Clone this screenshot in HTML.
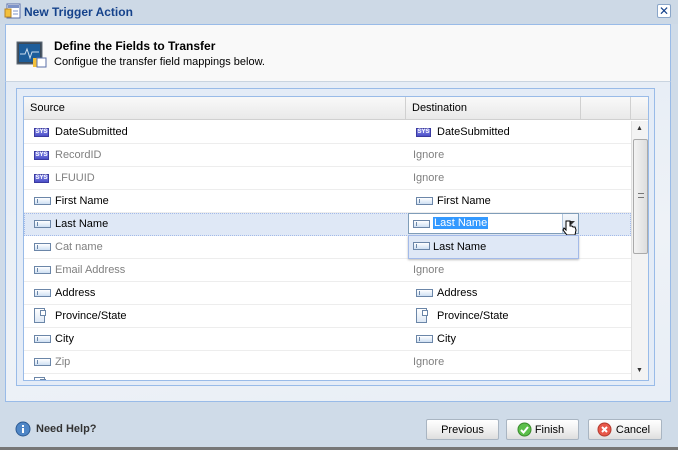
<!DOCTYPE html>
<html><head><style>
*{margin:0;padding:0;box-sizing:border-box}
body{width:678px;height:450px;overflow:hidden;background:#cfdbe8;font-family:"Liberation Sans",sans-serif;font-size:11px;position:relative}
.abs{position:absolute}
.title{left:0;top:0;width:678px;height:24px;background:#cdd9e6;}
.title span{position:absolute;left:24px;top:5px;font-weight:bold;font-size:12px;color:#15428b}
.hdr{left:5px;top:24px;width:666px;height:58px;background:#f9f9f9;border:1px solid #99bbe8;border-bottom:1px solid #c9d4e0}
.body{left:5px;top:82px;width:666px;height:320px;background:linear-gradient(170deg,#e3ebf5,#eef2f7 60%,#e8eef6);border:1px solid #99bbe8;border-top:none}
.gridwrap{left:16px;top:88px;width:639px;height:298px;border:1px solid #99bbe8;background:#e4ecf7}
.grid{left:23px;top:96px;width:626px;height:285px;border:1px solid #99bbe8;background:#fff;overflow:hidden}
.gh{position:absolute;left:0;top:0;width:626px;height:23px;background:linear-gradient(#f9f9f9,#e9e9e9);border-bottom:1px solid #d0d0d0}
.gh div{position:absolute;top:0;height:23px;line-height:22px;padding-left:6px;border-right:1px solid #d0d0d0;color:#000}
.row{position:absolute;left:0;width:607px;height:23px;border-bottom:1px solid #ededed}
.row span{position:absolute;top:5px}
.g{color:#808080}
.sys{position:absolute;width:15px;height:9px;background:linear-gradient(#8a8ee8,#4b4fc8);border:1px solid #3a3aa0;color:#fff;font-size:6px;line-height:7px;text-align:center;font-weight:bold;font-style:normal}
.tb{position:absolute;width:17px;height:8px;border:1px solid #6b86a8;background:linear-gradient(#fff,#cfe0f3)}
.tb:before{content:"";position:absolute;left:2px;top:1px;width:1px;height:4px;background:#6b86a8}
.dd{position:absolute;width:11px;height:15px;border:1px solid #6b86a8;background:linear-gradient(#fff,#dde8f5)}
.dd:after{content:"";position:absolute;left:5px;top:1px;width:4px;height:4px;border:1px solid #6b86a8;background:#fff}
.scroll{left:607px;top:24px;width:18px;height:260px;background:#f3f3f3;border-left:1px solid #e0e0e0}
.btn{position:absolute;top:419px;height:21px;border:1px solid #a9b5c2;border-radius:2px;background:linear-gradient(#fff,#f1f1f1 50%,#dedede);text-align:center;line-height:20px;font-size:11px;color:#000}
</style></head><body>
<div class="abs title"><svg style="position:absolute;left:4px;top:3px" width="17" height="17"><rect x="3" y="1" width="13" height="14" fill="#fff" stroke="#5a6fa8"/><rect x="4" y="2" width="11" height="3" fill="#7d93c8"/><path d="M1 6h6v8H1z" fill="#f3c03b" stroke="#b7852a"/><path d="M9 8h5M9 11h5" stroke="#7d93c8"/></svg><span>New Trigger Action</span>
<div style="position:absolute;left:657px;top:4px;width:14px;height:14px;border:1px solid #8aa6c9;background:#fff;border-radius:2px;color:#15428b;font-size:12px;line-height:12px;text-align:center">✕</div></div>
<div class="abs hdr">
<svg style="position:absolute;left:10px;top:16px" width="32" height="28"><rect x="1" y="1" width="25" height="22" fill="#3c4a58" stroke="#5f6b78"/><rect x="3" y="3" width="21" height="18" fill="#1d5d9a"/><path d="M4 13h5l2-5 3 9 2-6h7" stroke="#cde" fill="none"/><path d="M17 17h6v9h-6z" fill="#f3c03b"/><rect x="21" y="17" width="9" height="9" fill="#fff" stroke="#5a6fa8"/></svg>
<div style="position:absolute;left:48px;top:14px;font-weight:bold;font-size:12px">Define the Fields to Transfer</div>
<div style="position:absolute;left:48px;top:31px;font-size:11px">Configue the transfer field mappings below.</div>
</div>
<div class="abs body"></div>
<div class="abs gridwrap"></div>
<div class="abs grid">
<div class="gh"><div style="left:0;width:382px">Source</div><div style="left:382px;width:175px">Destination</div><div style="left:557px;width:50px"></div><div style="left:607px;width:19px;border:none"></div></div>

<div class="row" style="top:24px"><i class="sys" style="left:10px;top:7px">SYS</i><span style="left:31px">DateSubmitted</span><i class="sys" style="left:392px;top:7px">SYS</i><span style="left:413px">DateSubmitted</span></div>
<div class="row" style="top:47px"><i class="sys" style="left:10px;top:7px">SYS</i><span class="g" style="left:31px">RecordID</span><span class="g" style="left:389px">Ignore</span></div>
<div class="row" style="top:70px"><i class="sys" style="left:10px;top:7px">SYS</i><span class="g" style="left:31px">LFUUID</span><span class="g" style="left:389px">Ignore</span></div>
<div class="row" style="top:93px"><i class="tb" style="left:10px;top:7px"></i><span style="left:31px">First Name</span><i class="tb" style="left:392px;top:7px"></i><span style="left:413px">First Name</span></div>
<div class="row" style="top:116px;background:#dfe8f6;border:1px dotted #a3bae9"><i class="tb" style="left:9px;top:6px"></i><span style="left:30px;top:4px">Last Name</span></div>
<div class="row" style="top:139px"><i class="tb" style="left:10px;top:7px"></i><span class="g" style="left:31px">Cat name</span></div>
<div class="row" style="top:162px"><i class="tb" style="left:10px;top:7px"></i><span class="g" style="left:31px">Email Address</span><span class="g" style="left:389px">Ignore</span></div>
<div class="row" style="top:185px"><i class="tb" style="left:10px;top:7px"></i><span style="left:31px">Address</span><i class="tb" style="left:392px;top:7px"></i><span style="left:413px">Address</span></div>
<div class="row" style="top:208px"><i class="dd" style="left:10px;top:3px"></i><span style="left:31px">Province/State</span><i class="dd" style="left:392px;top:3px"></i><span style="left:413px">Province/State</span></div>
<div class="row" style="top:231px"><i class="tb" style="left:10px;top:7px"></i><span style="left:31px">City</span><i class="tb" style="left:392px;top:7px"></i><span style="left:413px">City</span></div>
<div class="row" style="top:254px"><i class="tb" style="left:10px;top:7px"></i><span class="g" style="left:31px">Zip</span><span class="g" style="left:389px">Ignore</span></div>
<div class="row" style="top:277px"><i class="dd" style="left:10px;top:3px"></i></div>

<div class="abs scroll"><div style="position:absolute;left:4px;top:4px;font-size:7px;color:#333">▲</div>
<div style="position:absolute;left:1px;top:18px;width:15px;height:115px;border:1px solid #aaa;border-radius:2px;background:linear-gradient(90deg,#f3f3f3,#ddd)"><div style="position:absolute;left:4px;top:53px;width:6px;height:5px;border-top:1px solid #777;border-bottom:1px solid #777"></div></div>
<div style="position:absolute;left:4px;top:246px;font-size:7px;color:#333">▼</div></div>

<div style="position:absolute;left:384px;top:116px;width:171px;height:21px;border:1px solid #7f9db9;background:#fff"><i class="tb" style="left:4px;top:6px"></i><span style="position:absolute;left:24px;top:3px;background:#3399ff;color:#fff;padding:0 1px">Last Name</span><div style="position:absolute;right:0;top:0;width:16px;height:19px;background:linear-gradient(#f4f7fb,#dbe5f1);border-left:1px solid #b5c8de"><div style="position:absolute;left:4px;top:7px;width:0;height:0;border-left:4px solid transparent;border-right:4px solid transparent;border-top:4px solid #333"></div></div><svg style="position:absolute;left:152px;top:4px" width="18" height="22"><path d="M5 3v9l-2-2-1 2 4 5h8l1-5-1-3-2 0-1-1-2 0V3z" fill="#fff" stroke="#000"/></svg></div>
<div style="position:absolute;left:384px;top:138px;width:171px;height:24px;border:1px solid #a3bae9;background:#dfe8f6;box-shadow:0 1px 2px #bbb"><i class="tb" style="left:4px;top:6px"></i><span style="position:absolute;left:24px;top:5px">Last Name</span></div>
</div>

<svg style="position:absolute;left:15px;top:421px" width="16" height="16"><circle cx="8" cy="8" r="7" fill="#4f86c6" stroke="#2d5b94"/><rect x="7" y="7" width="2" height="5" fill="#fff"/><rect x="7" y="4" width="2" height="2" fill="#fff"/></svg>
<div style="position:absolute;left:36px;top:423px;font-weight:bold;color:#333">Need Help?</div>
<div class="btn" style="left:426px;width:73px">Previous</div>
<div class="btn" style="left:506px;width:73px"><svg style="position:absolute;left:10px;top:2px" width="15" height="15"><circle cx="7.5" cy="7.5" r="6.5" fill="#5cbf4a" stroke="#3a8a2c"/><path d="M4 8l2.5 2.5L11 5" stroke="#fff" stroke-width="2" fill="none"/></svg><span style="margin-left:14px">Finish</span></div>
<div class="btn" style="left:588px;width:74px"><svg style="position:absolute;left:8px;top:2px" width="15" height="15"><circle cx="7.5" cy="7.5" r="6.5" fill="#e8584a" stroke="#b33a2e"/><path d="M5 5l5 5M10 5l-5 5" stroke="#fff" stroke-width="2"/></svg><span style="margin-left:16px">Cancel</span></div>
<div style="position:absolute;left:0;top:447px;width:678px;height:3px;background:#777"></div>
</body></html>
